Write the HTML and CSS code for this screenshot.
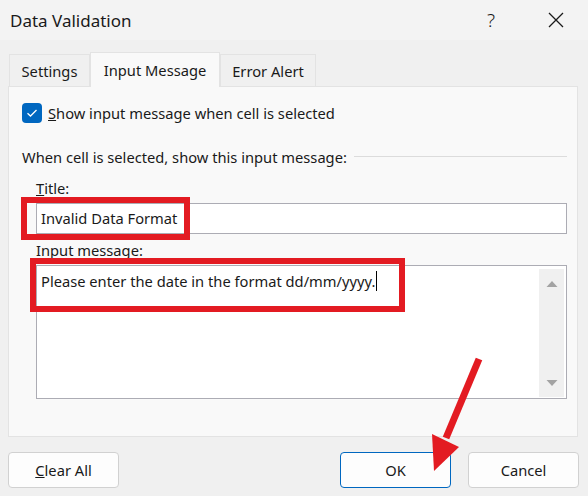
FILE: index.html
```html
<!DOCTYPE html>
<html lang="en">
<head>
    <meta charset="UTF-8">
    <title>Data Validation</title>
    <link rel="stylesheet" href="styles.css">
</head>
<body>
<div class="dialog">

    <div class="titlebar">
        <span class="title">Data Validation</span>
        <span class="help">?</span>
        <span class="close">
            <svg width="16" height="16" viewBox="0 0 16 16"><path d="M1 1L15 15M15 1L1 15" stroke="#1a1a1a" stroke-width="1.3"/></svg>
        </span>
    </div>

    <!-- tabs -->
    <div class="tabs">
        <div class="tab">Settings</div>
        <div class="tab active">Input Message</div>
        <div class="tab">Error Alert</div>
    </div>

    <div class="panel">
        <div class="check-row">
            <span class="checkbox">
                <svg width="12" height="10" viewBox="0 0 12 10"><path d="M1.5 5.2L4.5 8L10.5 2" fill="none" stroke="#fff" stroke-width="1.3"/></svg>
            </span>
            <span><u>S</u>how input message when cell is selected</span>
        </div>

        <div class="group-head">
            <span>When cell is selected, show this input message:</span>
            <span class="rule"></span>
        </div>

        <div class="field-label"><u>T</u>itle:</div>
        <div class="text-box">Invalid Data Format</div>

        <div class="field-label">Input message:</div>
        <div class="text-area">
            <div class="msg">Please enter the date in the format dd/mm/yyyy.<span class="caret"></span></div>
            <div class="scrollbar">
                <svg width="12" height="8" viewBox="0 0 12 8"><path d="M6 1L11.5 7H0.5Z" fill="#a3a3a3"/></svg>
                <svg width="12" height="8" viewBox="0 0 12 8"><path d="M6 7L11.5 1H0.5Z" fill="#a3a3a3"/></svg>
            </div>
        </div>
    </div>

    <div class="buttons">
        <button class="btn"><u>C</u>lear All</button>
        <span class="spacer"></span>
        <button class="btn ok">OK</button>
        <button class="btn">Cancel</button>
    </div>

    <!-- red annotations on top of the screenshot -->
    <div class="mark mark-title"></div>
    <div class="mark mark-msg"></div>
    <svg class="arrow" width="588" height="496" viewBox="0 0 588 496">
        <path d="M479 359L446 438" stroke="#e31b22" stroke-width="7"/>
        <path d="M432 434L459 447L434 471Z" fill="#e31b22"/>
    </svg>
</div>
</body>
</html>
```

FILE: styles.css
```css
body {
    margin: 0;
    padding: 0;
    background: #f0f0f0;
    font-family: 'Noto Sans', 'Open Sans', sans-serif;
    font-size: 14.7px;
    color: #1a1a1a;
}
.dialog {
    position: relative;
    width: 588px;
    height: 496px;
    overflow: hidden;
}
.titlebar {
    height: 40px;
    background: #f3f3f3;
    display: flex;
    align-items: center;
}
.title {
    font-size: 17px;
    padding-left: 10px;
    flex: 1;
}
.help {
    font-size: 19px;
    font-weight: 300;
    margin-right: 53px;
}
.close {
    display: flex;
    margin-right: 24px;
}
.tabs {
    margin-top: 12px;
    padding-left: 9px;
    height: 34px;
    display: flex;
    align-items: flex-end;
}
.tab {
    height: 32px;
    box-sizing: border-box;
    border: 1px solid #e3e3e3;
    border-bottom: none;
    background: #f0f0f0;
    display: flex;
    align-items: center;
    justify-content: center;
    width: 81px;
}
.tab.active {
    height: 35px;
    margin-bottom: -1px;
    width: 130px;
    background: #f9f9f9;
    position: relative;
    z-index: 1;
}
.tab:last-child {
    width: 96px;
}
.panel {
    margin: 0 10px 0 8px;
    height: 351px;
    box-sizing: border-box;
    border: 1px solid #e3e3e3;
    background: #f9f9f9;
    padding: 16px 10px 0 13px;
}
.check-row {
    display: flex;
    align-items: center;
    gap: 6px;
    height: 20px;
}
.checkbox {
    width: 20px;
    height: 20px;
    border-radius: 4px;
    background: #0067c0;
    display: flex;
    align-items: center;
    justify-content: center;
}
.group-head {
    margin-top: 24px;
    display: flex;
    align-items: center;
    gap: 7px;
    height: 20px;
}
.rule {
    flex: 1;
    border-top: 1px solid #dcdcdc;
    margin-top: -2px;
}
.field-label {
    margin: 11px 0 0 14px;
    height: 20px;
    line-height: 20px;
}
.text-box {
    margin: 5px 0 0 14px;
    height: 31px;
    box-sizing: border-box;
    border: 1px solid #acacb4;
    background: #fff;
    padding-left: 4px;
    line-height: 29px;
}
.field-label + .text-area {
    margin-top: 5px;
}
.text-box + .field-label {
    margin-top: 6px;
}
.text-area {
    margin-left: 14px;
    height: 134px;
    box-sizing: border-box;
    border: 1px solid #acacb4;
    background: #fff;
    display: flex;
}
.msg {
    flex: 1;
    padding: 4px 0 0 4px;
    line-height: 22px;
}
.caret {
    display: inline-block;
    width: 1px;
    height: 20px;
    background: #000;
    vertical-align: -4px;
    margin-left: 1px;
}
.scrollbar {
    width: 25px;
    margin: 3px 2px 1px 0;
    background: #f0f0f0;
    display: flex;
    flex-direction: column;
    align-items: center;
    justify-content: space-between;
    padding: 11px 0 10px;
    box-sizing: border-box;
}
.buttons {
    margin-top: 15px;
    padding: 0 9px 0 8px;
    display: flex;
    gap: 17px;
}
.spacer {
    flex: 1;
}
.btn {
    width: 111px;
    height: 36px;
    box-sizing: border-box;
    border: 1px solid #d1d1d1;
    border-radius: 4px;
    background: #fdfdfd;
    font-family: inherit;
    font-size: 14.7px;
    color: #1a1a1a;
    padding: 0;
}
.btn.ok {
    border-color: #0067c0;
}
.mark {
    position: absolute;
    border: 6px solid #e31b22;
    box-sizing: border-box;
}
.mark-title {
    left: 21px;
    top: 197px;
    width: 169px;
    height: 43px;
}
.mark-msg {
    left: 30px;
    top: 258px;
    width: 375px;
    height: 54px;
}
.arrow {
    position: absolute;
    left: 0;
    top: 0;
}
```
